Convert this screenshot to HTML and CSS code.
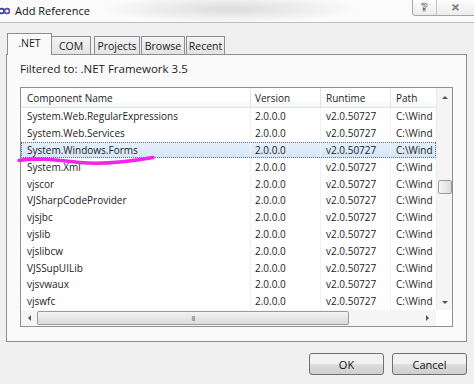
FILE: index.html
```html
<!DOCTYPE html>
<html lang="en">
<head>
    <meta charset="UTF-8">
    <title>Add Reference</title>
    <link rel="stylesheet" href="styles.css">
</head>
<body>
    <div class="window">
        <!-- Title bar -->
        <div class="titlebar">
            <svg class="title-icon" width="11" height="8" viewBox="0 0 11 8">
                <ellipse cx="2.5" cy="4" rx="2.6" ry="2.4" fill="none" stroke="#3b3f9c" stroke-width="1.8"/>
                <ellipse cx="8" cy="4" rx="2.6" ry="2.4" fill="none" stroke="#5a4aa8" stroke-width="1.8"/>
            </svg>
            <span class="title-text">Add Reference</span>
            <div class="caption">
                <span class="caption-btn help">?</span>
                <span class="caption-btn close">✕</span>
            </div>
        </div>

        <div class="main">
            <!-- Tabs -->
            <div class="tabs">
                <div class="tab active tab-net">.NET</div>
                <div class="tab tab-com">COM</div>
                <div class="tab tab-projects">Projects</div>
                <div class="tab tab-browse">Browse</div>
                <div class="tab tab-recent">Recent</div>
            </div>

            <div class="panel">
                <div class="filter">Filtered to: .NET Framework 3.5</div>

                <div class="list">
                    <div class="list-top">
                        <div class="list-body">
                            <div class="row header">
                                <div class="cell name">Component Name</div>
                                <div class="cell version">Version</div>
                                <div class="cell runtime">Runtime</div>
                                <div class="cell path">Path</div>
                            </div>
                            <div id="rows"></div>
                        </div>
                        <div class="vscroll">
                            <span class="arrow up"></span>
                            <span class="vthumb"></span>
                            <span class="arrow down"></span>
                        </div>
                    </div>
                    <div class="list-bottom">
                        <div class="hscroll">
                            <span class="arrow left"></span>
                            <span class="hthumb"><span class="grip">III</span></span>
                            <span class="arrow right"></span>
                        </div>
                        <div class="corner"></div>
                    </div>
                </div>
            </div>

            <div class="buttons">
                <button class="button">OK</button>
                <button class="button">Cancel</button>
            </div>
        </div>

        <!-- hand drawn highlight over the list -->
        <svg class="scribble" width="474" height="384" viewBox="0 0 474 384">
            <path d="M19 160.5 C 35 157.5, 55 160, 80 162.5 S 130 161.5, 153 157.5" fill="none" stroke="#f224e6" stroke-width="3.6" stroke-linecap="round"/>
        </svg>
    </div>

    <script>
        const components = [
            'System.Web.RegularExpressions',
            'System.Web.Services',
            'System.Windows.Forms',
            'System.Xml',
            'vjscor',
            'VJSharpCodeProvider',
            'vjsjbc',
            'vjslib',
            'vjslibcw',
            'VJSSupUILib',
            'vjsvwaux',
            'vjswfc'
        ];

        const rows = document.getElementById('rows');
        components.forEach(function(name) {
            const row = document.createElement('div');
            row.className = 'row' + (name === 'System.Windows.Forms' ? ' selected' : '');
            row.innerHTML = `
                <div class="cell name">${name}</div>
                <div class="cell version">2.0.0.0</div>
                <div class="cell runtime">v2.0.50727</div>
                <div class="cell path">C:\\Wind</div>
            `;
            rows.appendChild(row);
        });
    </script>
</body>
</html>
```

FILE: styles.css
```css
/* General Reset */
* {
    margin: 0;
    padding: 0;
    box-sizing: border-box;
}

body {
    font-family: 'Open Sans', 'Noto Sans', sans-serif;
    font-size: 10px;
    color: #1b1b1b;
    background: #f0f0f0;
}

.window {
    position: relative;
    width: 474px;
    height: 384px;
    overflow: hidden;
    background: #f0f0f0;
}

/* Title bar */
.titlebar {
    height: 23px;
    display: flex;
    align-items: flex-start;
    border-bottom: 1px solid #bdbdbd;
    background: radial-gradient(ellipse 130px 14px at 230px 9px, #dcdcdc, #fbfbfb 100%);
}

.title-icon {
    margin-top: 7px;
    margin-left: -1px;
}

.title-text {
    margin-left: 5px;
    margin-top: 3px;
    font-size: 11px;
    color: #111;
}

.caption {
    margin-left: auto;
    display: flex;
    height: 16px;
    border: 1px solid #a6a6a6;
    border-top: none;
    border-right: none;
    border-radius: 0 0 0 4px;
    background: linear-gradient(#fdfdfd, #ececec);
}

.caption-btn {
    display: flex;
    justify-content: center;
    align-items: center;
    color: #fff;
    -webkit-text-stroke: 0.7px #666;
    font-family: 'DejaVu Sans', sans-serif;
    font-weight: bold;
}

.help {
    width: 24px;
    font-size: 11px;
    border-right: 1px solid #c4c4c4;
}

.close {
    width: 37px;
    font-size: 10px;
}

/* Tabs and panel */
.main {
    padding: 10px 7px 0 6px;
}

.tabs {
    display: flex;
    align-items: flex-end;
    height: 21px;
    padding-left: 1px;
}

.tab {
    height: 18px;
    display: flex;
    justify-content: center;
    align-items: center;
    border: 1px solid #8c8e94;
    border-bottom: none;
    background: linear-gradient(#f3f3f3, #e4e4e4);
    font-size: 10.5px;
    padding-top: 1px;
}

.tab.active {
    position: relative;
    z-index: 1;
    height: 22px;
    margin-bottom: -1px;
    background: #fafafa;
    padding-top: 0;
    padding-bottom: 3px;
}

.tab-net { width: 45px; }
.tab-com { width: 40px; margin-left: -1px; }
.tab-projects { width: 46px; margin-left: 3px; }
.tab-browse { width: 44px; margin-left: 1px; }
.tab-recent { width: 39px; margin-left: 1px; }

.panel {
    height: 288px;
    border: 1px solid #8c8e94;
    background: #fafafa;
    padding: 7px 13px 0 13px;
}

.filter {
    font-size: 11.5px;
    line-height: 14px;
    margin-bottom: 11px;
}

/* List view */
.list {
    border: 1px solid #8e9093;
    background: #fff;
    width: 433px;
}

.list-top {
    display: flex;
}

.list-body {
    width: 415px;
}

.row {
    display: flex;
    height: 16.8px;
    align-items: center;
    white-space: nowrap;
}

.row.header {
    height: 20px;
    background: linear-gradient(#ffffff 60%, #f4f5f7);
    border-bottom: 1px solid #e2e3e6;
}

.row.header .cell {
    height: 100%;
    display: flex;
    align-items: center;
}

.row.header .cell + .cell {
    border-left: 1px solid #e2e3e6;
}

.cell {
    padding-left: 6px;
    overflow: hidden;
}

.row .cell + .cell {
    border-left: 1px solid #f2f2f2;
    height: 100%;
    display: flex;
    align-items: center;
}

.name { width: 229px; }
.version { width: 70px; padding-left: 4px; }
.runtime { width: 70px; padding-left: 5px; }
.path { width: 46px; padding-left: 5px; }

.row.selected {
    background: linear-gradient(#e6f0fb, #d4e5f8);
    outline: 1px dotted #5d6f86;
    outline-offset: -1px;
}

/* Scrollbars */
.vscroll {
    width: 16px;
    position: relative;
    background: #f5f5f5;
    border-left: 1px solid #ececec;
    height: 222px;
}

.vthumb {
    position: absolute;
    left: 1px;
    top: 92px;
    width: 14px;
    height: 14px;
    border: 1px solid #9a9a9a;
    border-radius: 2px;
    background: linear-gradient(90deg, #f5f5f5, #dcdcdc);
}

.arrow {
    position: absolute;
    width: 0;
    height: 0;
    border: 3px solid transparent;
}

.arrow.up {
    left: 5px;
    top: 5px;
    border-bottom: 3px solid #555;
}

.arrow.down {
    left: 5px;
    bottom: 3px;
    border-top: 3px solid #555;
}

.list-bottom {
    display: flex;
    height: 16px;
}

.hscroll {
    position: relative;
    width: 415px;
    background: #f5f5f5;
}

.corner {
    width: 16px;
    background: #fff;
}

.arrow.left {
    left: 4px;
    top: 5px;
    border-right: 3px solid #555;
}

.arrow.right {
    right: 4px;
    top: 5px;
    border-left: 3px solid #555;
}

.hthumb {
    position: absolute;
    left: 16px;
    top: 1px;
    width: 312px;
    height: 14px;
    border: 1px solid #9a9a9a;
    border-radius: 2px;
    background: linear-gradient(#f3f3f3, #dadada);
    display: flex;
    justify-content: center;
    align-items: center;
}

.grip {
    font-size: 7px;
    letter-spacing: -1px;
    color: #777;
}

/* Buttons */
.buttons {
    display: flex;
    justify-content: flex-end;
    gap: 8px;
    margin-top: 11px;
}

.button {
    width: 75px;
    height: 22px;
    border: 1px solid #707070;
    border-radius: 3px;
    background: linear-gradient(#f2f2f2 50%, #dddddd 50%, #cfcfcf);
    font-family: 'Open Sans', 'Noto Sans', sans-serif;
    font-size: 11px;
    color: #111;
}

.scribble {
    position: absolute;
    left: 0;
    top: 0;
    pointer-events: none;
}
```
